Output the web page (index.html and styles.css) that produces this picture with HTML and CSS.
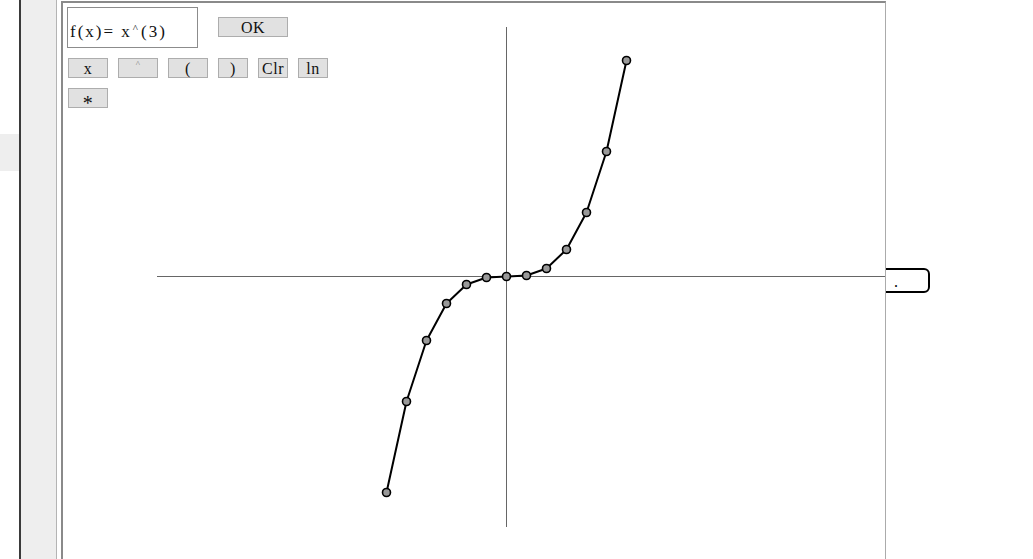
FILE: index.html
```html
<!DOCTYPE html>
<html>
<head>
<meta charset="utf-8">
<link rel="stylesheet" href="styles.css">
</head>
<body>
<div class="gutter"><div class="gutter-tab"></div></div>
<div class="rail"></div>
<div class="sidebar"></div>
<div class="spacer"></div>
<div class="stage">
  <div class="toolbar">
    <div class="row row-top">
      <div class="formula">f(x)= x<span class="hat">^</span>(3)</div>
      <button class="btn btn-ok">OK</button>
    </div>
    <div class="row keys">
      <button class="btn w40">x</button>
      <button class="btn w40 caret">^</button>
      <button class="btn w40">(</button>
      <button class="btn w30">)</button>
      <button class="btn w30">Clr</button>
      <button class="btn w30">ln</button>
    </div>
    <div class="row keys">
      <button class="btn w40 star">*</button>
    </div>
  </div>
  <svg class="plot" width="822" height="560" viewBox="63 3 822 560">
    <line class="axis" x1="157" y1="276.5" x2="885" y2="276.5"/>
    <line class="axis" x1="506.5" y1="27" x2="506.5" y2="527"/>
    <polyline class="curve" points="386.5,492.5 406.5,401.5 426.5,340.5 446.5,303.5 466.5,284.5 486.5,277.5 506.5,276.5 526.5,275.5 546.5,268.5 566.5,249.5 586.5,212.5 606.5,151.5 626.5,60.5"/>
    <g class="pts">
      <circle cx="386.5" cy="492.5" r="4"/>
      <circle cx="406.5" cy="401.5" r="4"/>
      <circle cx="426.5" cy="340.5" r="4"/>
      <circle cx="446.5" cy="303.5" r="4"/>
      <circle cx="466.5" cy="284.5" r="4"/>
      <circle cx="486.5" cy="277.5" r="4"/>
      <circle cx="506.5" cy="276.5" r="4"/>
      <circle cx="526.5" cy="275.5" r="4"/>
      <circle cx="546.5" cy="268.5" r="4"/>
      <circle cx="566.5" cy="249.5" r="4"/>
      <circle cx="586.5" cy="212.5" r="4"/>
      <circle cx="606.5" cy="151.5" r="4"/>
      <circle cx="626.5" cy="60.5" r="4"/>
    </g>
  </svg>
</div>
<div class="tag">.</div>
</body>
</html>
```
FILE: styles.css
```css
html, body {
  margin: 0;
  padding: 0;
  background: #fff;
}
body {
  display: flex;
  align-items: flex-start;
  height: 559px;
  overflow: hidden;
  position: relative;
  font-family: "Liberation Serif", "DejaVu Serif", serif;
}
.gutter {
  width: 19px;
  height: 559px;
  flex: none;
}
.gutter-tab {
  margin-top: 134px;
  height: 37px;
  background: #eeeeee;
}
.rail {
  width: 2px;
  height: 559px;
  background: #3a3a3a;
  flex: none;
}
.sidebar {
  width: 35px;
  height: 559px;
  background: #eeeeee;
  border-right: 1px solid #b4b4b4;
  flex: none;
}
.spacer {
  width: 4px;
  flex: none;
}
.stage {
  position: relative;
  z-index: 1;
  flex: none;
  margin-top: 1px;
  width: 822px;
  height: 558px;
  background: #fff;
  border-left: 2px solid #8a8a8a;
  border-top: 2px solid #8a8a8a;
  border-right: 1px solid #ababab;
}
.toolbar {
  position: relative;
  z-index: 2;
  padding: 4px 0 0 4px;
  display: flex;
  flex-direction: column;
  gap: 10px;
}
.row {
  display: flex;
  align-items: flex-start;
}
.row-top {
  gap: 20px;
}
.keys {
  gap: 10px;
  padding-left: 1px;
}
.formula {
  box-sizing: border-box;
  width: 131px;
  height: 41px;
  border: 1px solid #8c8c8c;
  padding: 0 0 0 2px;
  font-family: "Liberation Serif", "DejaVu Serif", serif;
  font-size: 17px;
  line-height: 40px;
  color: #111;
  letter-spacing: 2px;
  white-space: nowrap;
}
.hat {
  font-size: 11px;
  vertical-align: 5px;
  margin: 0 1px;
}
.btn {
  box-sizing: border-box;
  height: 20px;
  margin: 0;
  padding: 2px 0 0 0;
  background: #e1e1e1;
  border: 1px solid #adadad;
  border-radius: 0;
  font-family: "Liberation Serif", "DejaVu Serif", serif;
  font-size: 16px;
  line-height: 16px;
  color: #111;
  text-align: center;
  letter-spacing: 0.5px;
}
.btn-ok {
  width: 70px;
  margin-top: 10px;
}
.w40 { width: 40px; }
.w30 { width: 30px; }
.caret {
  font-size: 9px;
  line-height: 8px;
  color: #777;
  padding: 0 0 8px 0;
}
.star {
  font-size: 20px;
  line-height: 20px;
  padding: 4px 0 0 0;
}
.plot {
  position: absolute;
  left: 0;
  top: 0;
  z-index: 1;
}
.axis {
  stroke: #666;
  stroke-width: 1;
}
.curve {
  fill: none;
  stroke: #000;
  stroke-width: 2;
  stroke-linejoin: round;
}
.pts circle {
  fill: #999;
  stroke: #000;
  stroke-width: 1.6;
}
.tag {
  position: absolute;
  left: 872px;
  top: 268px;
  width: 54px;
  height: 21px;
  border: 2px solid #000;
  border-radius: 6px;
  z-index: 0;
  font-family: "Liberation Serif", serif;
  font-size: 16px;
  line-height: 24px;
  text-indent: 20px;
  color: #000;
}
```
